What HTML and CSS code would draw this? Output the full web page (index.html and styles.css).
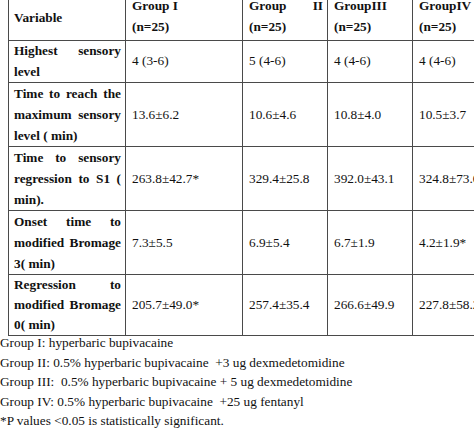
FILE: index.html
```html
<!DOCTYPE html>
<html>
<head>
<meta charset="utf-8">
<link rel="stylesheet" href="styles.css">
</head>
<body>
<div class="page">
  <table class="data">
    <colgroup>
      <col class="c-var"><col class="c-g1"><col class="c-g"><col class="c-g"><col class="c-g">
    </colgroup>
    <tr class="head">
      <th>Variable</th>
      <th>Group I<br>(n=25)</th>
      <th>Group II (n=25)</th>
      <th>GroupIII (n=25)</th>
      <th>GroupIV (n=25)</th>
    </tr>
    <tr class="r2">
      <th>Highest sensory level</th>
      <td>4 (3-6)</td><td>5 (4-6)</td><td>4 (4-6)</td><td>4 (4-6)</td>
    </tr>
    <tr class="r3">
      <th>Time to reach the maximum sensory level ( min)</th>
      <td>13.6±6.2</td><td>10.6±4.6</td><td>10.8±4.0</td><td>10.5±3.7</td>
    </tr>
    <tr class="r3">
      <th>Time to sensory regression to S1 ( min).</th>
      <td>263.8±42.7*</td><td>329.4±25.8</td><td>392.0±43.1</td><td>324.8±73.0</td>
    </tr>
    <tr class="r3">
      <th>Onset time to modified Bromage 3( min)</th>
      <td>7.3±5.5</td><td>6.9±5.4</td><td>6.7±1.9</td><td>4.2±1.9*</td>
    </tr>
    <tr class="r3 last">
      <th>Regression to modified Bromage 0( min)</th>
      <td>205.7±49.0*</td><td>257.4±35.4</td><td>266.6±49.9</td><td>227.8±58.2</td>
    </tr>
  </table>
  <div class="notes">
    <p>Group I: hyperbaric bupivacaine</p>
    <p>Group II: 0.5% hyperbaric bupivacaine&nbsp; +3 ug dexmedetomidine</p>
    <p>Group III:&nbsp; 0.5% hyperbaric bupivacaine + 5 ug dexmedetomidine</p>
    <p>Group IV: 0.5% hyperbaric bupivacaine&nbsp; +25 ug fentanyl</p>
    <p>*P values &lt;0.05 is statistically significant.</p>
  </div>
</div>
</body>
</html>
```
FILE: styles.css
```css
html, body {
  margin: 0;
  padding: 0;
  background: #fff;
  overflow: hidden;
}
.page {
  width: 474px;
  height: 428px;
  overflow: hidden;
  font-family: "Liberation Serif", "Times New Roman", serif;
  font-size: 13.3px;
  color: #111;
}
.data {
  border-collapse: collapse;
  table-layout: fixed;
  width: 489px;
  margin: -6px 0 0 8px;
}
.c-var { width: 117px; }
.c-g1 { width: 117px; }
.c-g { width: 85px; }
.data th, .data td {
  border: 1px solid #4a4a4a;
  padding: 0 5px 0 6px;
  line-height: 21px;
  vertical-align: middle;
  text-align: justify;
  text-align-last: left;
}
.data th {
  font-weight: bold;
  padding: 0 4px 0 5px;
}
.data td {
  font-weight: normal;
  white-space: nowrap;
}
.head th {
  height: 45px;
  padding-left: 6px;
  vertical-align: top;
}
.head th:first-child {
  padding-left: 5px;
  vertical-align: middle;
}
.r2 th, .r2 td {
  line-height: 20.5px;
}
.last th, .last td {
  line-height: 20px;
}
.notes {
  margin-top: -3px;
}
.notes p {
  margin: 0;
  line-height: 19.5px;
  white-space: pre-wrap;
}
```
